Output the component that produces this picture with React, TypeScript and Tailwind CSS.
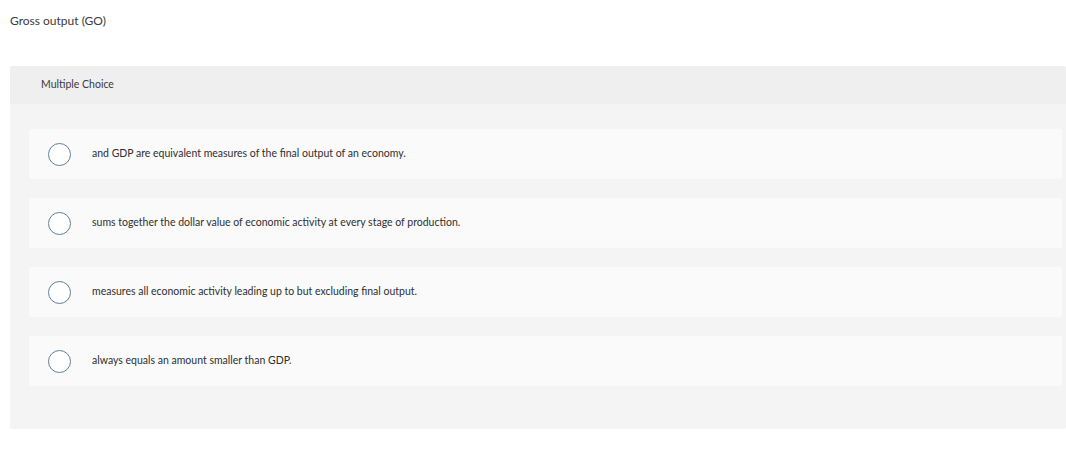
const choices = [
  'and GDP are equivalent measures of the final output of an economy.',
  'sums together the dollar value of economic activity at every stage of production.',
  'measures all economic activity leading up to but excluding final output.',
  'always equals an amount smaller than GDP.',
]

export default function App() {
  return (
    <div className="min-h-[459px] bg-white font-['Lato',sans-serif] text-[#333]">
      {/* Question prompt */}
      <p className="pl-[10px] pt-[13px] text-[12px] leading-[15px] text-[#3a3a3a]">
        Gross output (GO)
      </p>

      {/* Answer panel */}
      <div className="ml-[10px] mt-[38px] rounded-[2px] bg-[#f4f4f4] pb-[43px]">
        <div className="flex h-[38px] items-center rounded-t-[2px] bg-[#efefef] pl-[31px] text-[10.5px] text-[#3a3a3a]">
          Multiple Choice
        </div>

        <div className="mt-[25px] flex flex-col gap-[19px] pl-[19px] pr-[4px]">
          {choices.map((text) => (
            <label
              key={text}
              className="flex h-[50px] items-center rounded-[2px] bg-[#fafafa]"
            >
              <span className="ml-[19px] h-[23px] w-[23px] shrink-0 rounded-full border-[1.5px] border-[#5f7f98] bg-white" />
              <span className="ml-[21px] text-[10.5px] text-[#2f2f2f]">{text}</span>
            </label>
          ))}
        </div>
      </div>
    </div>
  )
}
